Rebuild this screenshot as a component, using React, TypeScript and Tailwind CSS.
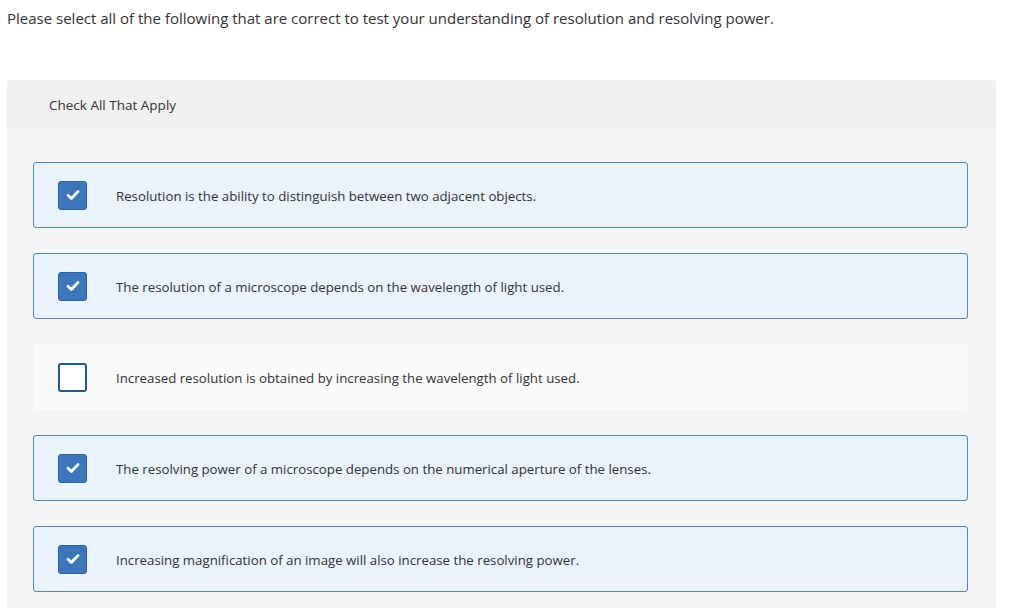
import React from "react";

const options = [
  { text: "Resolution is the ability to distinguish between two adjacent objects.", checked: true },
  { text: "The resolution of a microscope depends on the wavelength of light used.", checked: true },
  { text: "Increased resolution is obtained by increasing the wavelength of light used.", checked: false },
  { text: "The resolving power of a microscope depends on the numerical aperture of the lenses.", checked: true },
  { text: "Increasing magnification of an image will also increase the resolving power.", checked: true },
];

function Check({ checked }: { checked: boolean }) {
  if (checked) {
    return (
      <div className="flex h-[29px] w-[29px] shrink-0 items-center justify-center rounded-[3px] border border-[#2b62a3] bg-[#3b76ba]">
        <svg width="14" height="12" viewBox="0 0 14 12">
          <path d="M2 6.2 L5.4 9.4 L12 2.6" fill="none" stroke="#ffffff" strokeWidth="2.8" strokeLinecap="round" strokeLinejoin="round" />
        </svg>
      </div>
    );
  }
  return <div className="h-[29px] w-[29px] shrink-0 rounded-[3px] border-2 border-[#1f5a96] bg-white" />;
}

export default function App() {
  return (
    <div className="h-[608px] w-[1024px] overflow-hidden bg-white font-['Open_Sans',sans-serif] text-[#333333]">
      <div className="px-[7px] pt-[9px] text-[15px] leading-[18px]">
        Please select all of the following that are correct to test your understanding of resolution and resolving power.
      </div>
      <div className="ml-[7px] mt-[53px] w-[989px] rounded-[3px] bg-[#f5f5f5]">
        <div className="flex h-[49px] items-center rounded-t-[3px] bg-[#f0f0f0] pl-[42px] pt-[2px] text-[13.5px]">
          Check All That Apply
        </div>
        <div className="flex flex-col gap-[25px] pl-[26px] pr-[28px] pt-[33px] pb-[20px]">
          {options.map((o, i) => (
            <div
              key={i}
              className={
                o.checked
                  ? "flex h-[66px] items-center gap-[29px] rounded-[3px] border border-[#4a86c8] bg-[#eaf2fb] pl-[24px]"
                  : "flex h-[66px] items-center gap-[29px] rounded-[3px] border border-[#fafafa] bg-[#fafafa] pl-[24px]"
              }
            >
              <Check checked={o.checked} />
              <span className="pt-[3px] text-[13.25px]">{o.text}</span>
            </div>
          ))}
        </div>
      </div>
    </div>
  );
}
